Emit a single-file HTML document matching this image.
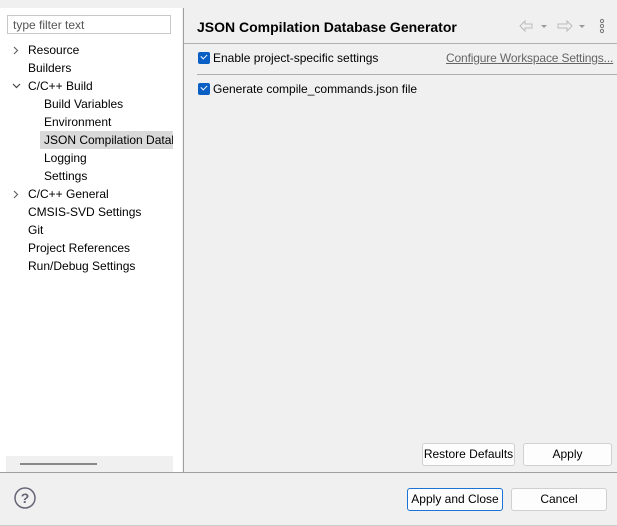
<!DOCTYPE html>
<html><head><style>
body{margin:0;width:617px;height:526px;background:#f0f0f0;font-family:"Liberation Sans",sans-serif;font-size:12px;color:#000;position:relative;overflow:hidden}
.a{position:absolute;white-space:nowrap}
#left{position:absolute;left:0;top:8px;width:182px;height:464px;background:#fff}
#vdiv{position:absolute;left:183px;top:8px;width:1px;height:464px;background:#a0a0a0}
.filter{left:7px;top:15px;width:164px;height:19px;border:1px solid #c8c8c8;background:#fff;color:#555;line-height:19px;padding-left:5px;box-sizing:border-box}
.btn{position:absolute;height:23px;border:1px solid #d0d0d0;border-radius:3px;background:#fdfdfd;text-align:center;line-height:21px;box-sizing:border-box}
.cb{position:absolute;width:12px;height:12px;background:#0a5fc4;border-radius:2px}
.cb:after{content:"";position:absolute;left:3px;top:2px;width:5px;height:3px;border-left:1.5px solid #fff;border-bottom:1.5px solid #fff;transform:rotate(-45deg)}
</style></head><body>
<div id="left"></div>
<div id="vdiv"></div>
<div class="a filter">type filter text</div>
<svg class="a" style="left:13px;top:46px" width="6" height="9"><path d="M1 1 L4.5 4.5 L1 8" fill="none" stroke="#666" stroke-width="1.2"/></svg>
<div class="a" style="left:28px;top:43px">Resource</div>
<div class="a" style="left:28px;top:61px">Builders</div>
<svg class="a" style="left:12px;top:83px" width="9" height="6"><path d="M1 1 L4.5 4.5 L8 1" fill="none" stroke="#444" stroke-width="1.2"/></svg>
<div class="a" style="left:28px;top:79px">C/C++ Build</div>
<div class="a" style="left:44px;top:97px">Build Variables</div>
<div class="a" style="left:44px;top:115px">Environment</div>
<div class="a" style="left:40px;top:131px;width:133px;height:18px;background:#d9d9d9"></div>
<div class="a" style="left:44px;top:133px;width:129px;overflow:hidden">JSON Compilation Database</div>
<div class="a" style="left:44px;top:151px">Logging</div>
<div class="a" style="left:44px;top:169px">Settings</div>
<svg class="a" style="left:13px;top:190px" width="6" height="9"><path d="M1 1 L4.5 4.5 L1 8" fill="none" stroke="#666" stroke-width="1.2"/></svg>
<div class="a" style="left:28px;top:187px">C/C++ General</div>
<div class="a" style="left:28px;top:205px">CMSIS-SVD Settings</div>
<div class="a" style="left:28px;top:223px">Git</div>
<div class="a" style="left:28px;top:241px">Project References</div>
<div class="a" style="left:28px;top:259px">Run/Debug Settings</div>
<div class="a" style="left:6px;top:456px;width:167px;height:16px;background:#f0f0f0"></div>
<div class="a" style="left:20px;top:463px;width:77px;height:2px;background:#888"></div>

<div class="a" style="left:197px;top:19px;font-size:14px;font-weight:bold">JSON Compilation Database Generator</div>
<svg class="a" style="left:518px;top:18px" width="92" height="16">
<path d="M2 8 L7 3 L7 6 L14 6 L14 10 L7 10 L7 13 Z" fill="none" stroke="#bbb"/>
<path d="M23 7 L29 7 L26 10 Z" fill="#999"/>
<path d="M54 8 L49 3 L49 6 L40 6 L40 10 L49 10 L49 13 Z" fill="none" stroke="#bbb"/>
<path d="M61 7 L67 7 L64 10 Z" fill="#999"/>
<circle cx="84" cy="3" r="1.6" fill="none" stroke="#777"/><circle cx="84" cy="8" r="1.6" fill="none" stroke="#777"/><circle cx="84" cy="13" r="1.6" fill="none" stroke="#777"/>
</svg>
<div class="a" style="left:184px;top:43px;width:433px;height:1px;background:#b0b0b0"></div>
<div class="cb" style="left:198px;top:52px"></div>
<div class="a" style="left:213px;top:51px">Enable project-specific settings</div>
<div class="a" style="left:446px;top:51px;color:#666;text-decoration:underline;letter-spacing:-0.15px">Configure Workspace Settings...</div>
<div class="a" style="left:197px;top:74px;width:420px;height:1px;background:#b0b0b0"></div>
<div class="cb" style="left:198px;top:83px"></div>
<div class="a" style="left:213px;top:82px">Generate compile_commands.json file</div>

<div class="btn" style="left:422px;top:443px;width:93px">Restore Defaults</div>
<div class="btn" style="left:523px;top:443px;width:89px">Apply</div>
<div class="a" style="left:0;top:472px;width:617px;height:1px;background:#a0a0a0"></div>
<svg class="a" style="left:13px;top:486px" width="24" height="24"><circle cx="12" cy="12" r="10" fill="none" stroke="#667" stroke-width="1.5"/><text x="12" y="17" text-anchor="middle" font-family="Liberation Sans" font-size="14" font-weight="bold" fill="#667">?</text></svg>
<div class="btn" style="left:407px;top:488px;width:96px;border-color:#1a73d6">Apply and Close</div>
<div class="btn" style="left:511px;top:488px;width:96px">Cancel</div>
<div class="a" style="left:0;top:525px;width:617px;height:1px;background:#ccc"></div>
</body></html>
